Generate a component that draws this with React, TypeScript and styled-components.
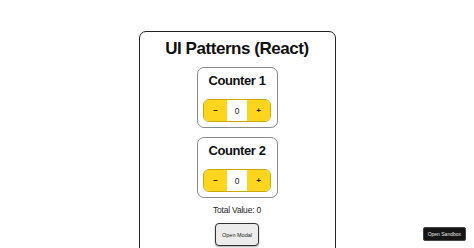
import React, { useState } from 'react';
import styled, { createGlobalStyle } from 'styled-components';

const GlobalStyle = createGlobalStyle`
  html, body {
    margin: 0;
    padding: 0;
    background: #ffffff;
    font-family: 'Liberation Sans', Arial, sans-serif;
    overflow: hidden;
  }
`;

const Page = styled.div`
  display: flex;
  justify-content: center;
  padding-top: 31px;
  width: 474px;
  height: 248px;
  box-sizing: border-box;
  overflow: hidden;
`;

const Panel = styled.div`
  width: 197px;
  box-sizing: border-box;
  border: 1px solid #222;
  border-radius: 7px;
  display: flex;
  flex-direction: column;
  align-items: center;
  padding: 7px 0 20px;
  height: 260px;
  flex-shrink: 0;
`;

const Title = styled.h1`
  margin: 0 0 8px;
  font-size: 17px;
  letter-spacing: -0.45px;
  font-weight: 700;
  color: #111;
  line-height: 20px;
`;

const CounterCard = styled.div`
  width: 81px;
  height: 61px;
  box-sizing: border-box;
  border: 1px solid #8a8a8a;
  border-radius: 7px;
  display: flex;
  flex-direction: column;
  align-items: center;
  padding-top: 5px;
  margin-bottom: 9px;
  flex-shrink: 0;
`;

const CounterTitle = styled.h2`
  margin: 0 0 10px;
  font-size: 13px;
  letter-spacing: -0.4px;
  font-weight: 700;
  color: #111;
  line-height: 16px;
`;

const Stepper = styled.div`
  display: flex;
  width: 68px;
  height: 23px;
  box-sizing: border-box;
  border: 1px solid #c9a800;
  border-radius: 6px;
  overflow: hidden;
`;

const StepButton = styled.button`
  width: 23px;
  border: none;
  background: #fdd41e;
  color: #222;
  font-family: 'Liberation Sans', Arial, sans-serif;
  font-size: 8px;
  font-weight: 700;
  padding: 0;
  cursor: pointer;
`;

const Value = styled.span`
  flex: 1;
  background: #fff;
  display: flex;
  align-items: center;
  justify-content: center;
  font-size: 8.5px;
  color: #222;
`;

const Total = styled.p`
  margin: -2px 0 7px;
  font-size: 8.5px;
  letter-spacing: -0.2px;
  color: #222;
  line-height: 11px;
`;

const ModalButton = styled.button`
  width: 44px;
  height: 23px;
  flex-shrink: 0;
  box-sizing: border-box;
  border: 1px solid #333;
  border-radius: 4px;
  background: #ececec;
  box-shadow: 0 1px 2px rgba(0, 0, 0, 0.35);
  font-family: 'Liberation Sans', Arial, sans-serif;
  font-size: 5.5px;
  color: #222;
  padding: 0;
  cursor: pointer;
`;

const SandboxBadge = styled.a`
  position: fixed;
  right: 8px;
  bottom: 7px;
  background: #151515;
  color: #e8e8e8;
  font-size: 5px;
  line-height: 6px;
  padding: 3px 4px;
  border-radius: 2px;
  border: 1px solid #444;
  text-decoration: none;
`;

const Counter: React.FC<{ label: string; value: number; onChange: (v: number) => void }> = ({
  label,
  value,
  onChange,
}) => (
  <CounterCard>
    <CounterTitle>{label}</CounterTitle>
    <Stepper>
      <StepButton onClick={() => onChange(value - 1)}>−</StepButton>
      <Value>{value}</Value>
      <StepButton onClick={() => onChange(value + 1)}>+</StepButton>
    </Stepper>
  </CounterCard>
);

export default function App() {
  const [a, setA] = useState(0);
  const [b, setB] = useState(0);

  return (
    <>
      <GlobalStyle />
      <Page>
        <Panel>
          <Title>UI Patterns (React)</Title>
          <Counter label="Counter 1" value={a} onChange={setA} />
          <Counter label="Counter 2" value={b} onChange={setB} />
          <Total>Total Value: {a + b}</Total>
          <ModalButton>Open Modal</ModalButton>
        </Panel>
      </Page>
      <SandboxBadge href="#">Open Sandbox</SandboxBadge>
    </>
  );
}
